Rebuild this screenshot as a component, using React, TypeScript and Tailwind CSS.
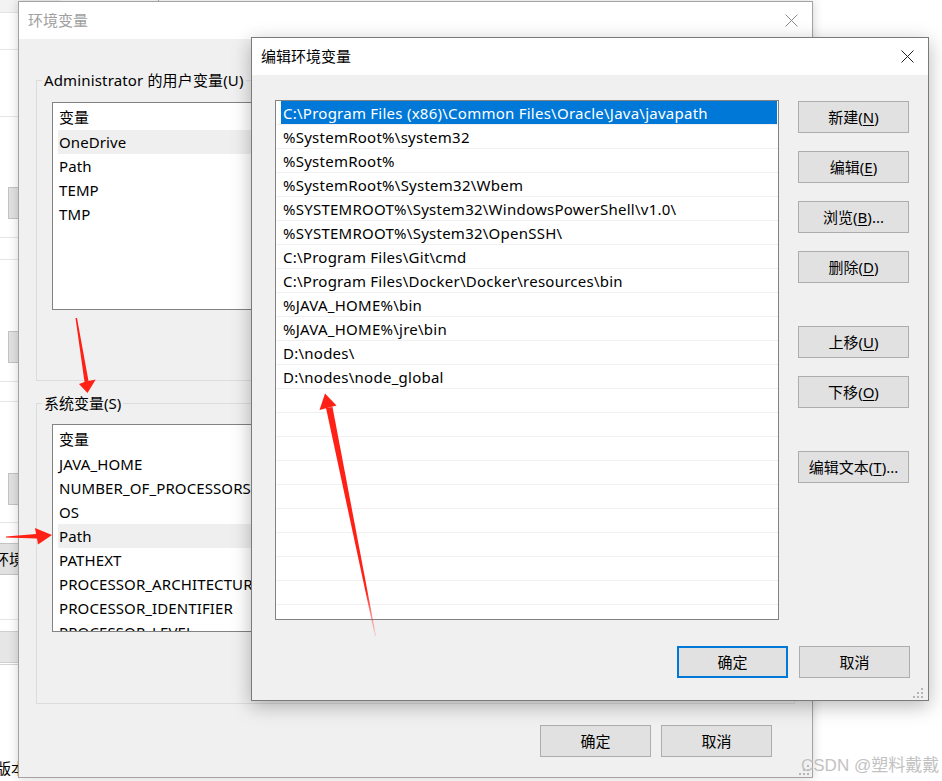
import React from "react";

const userVars = ["OneDrive", "Path", "TEMP", "TMP"];
const sysVars = [
  "JAVA_HOME",
  "NUMBER_OF_PROCESSORS",
  "OS",
  "Path",
  "PATHEXT",
  "PROCESSOR_ARCHITECTURE",
  "PROCESSOR_IDENTIFIER",
  "PROCESSOR_LEVEL",
];
const paths = [
  "C:\\Program Files (x86)\\Common Files\\Oracle\\Java\\javapath",
  "%SystemRoot%\\system32",
  "%SystemRoot%",
  "%SystemRoot%\\System32\\Wbem",
  "%SYSTEMROOT%\\System32\\WindowsPowerShell\\v1.0\\",
  "%SYSTEMROOT%\\System32\\OpenSSH\\",
  "C:\\Program Files\\Git\\cmd",
  "C:\\Program Files\\Docker\\Docker\\resources\\bin",
  "%JAVA_HOME%\\bin",
  "%JAVA_HOME%\\jre\\bin",
  "D:\\nodes\\",
  "D:\\nodes\\node_global",
];

function CloseX({ color }: { color: string }) {
  return (
    <svg width="13" height="13" viewBox="0 0 13 13">
      <path d="M0.5 0.5 L12.5 12.5 M12.5 0.5 L0.5 12.5" stroke={color} strokeWidth="1" />
    </svg>
  );
}

function Grip() {
  const dots = [
    [8, 0],
    [4, 4],
    [8, 4],
    [0, 8],
    [4, 8],
    [8, 8],
  ];
  return (
    <svg width="10" height="10" viewBox="0 0 10 10">
      {dots.map(([x, y]) => (
        <rect key={`${x}-${y}`} x={x} y={y} width="2" height="2" fill="#b5b5b5" />
      ))}
    </svg>
  );
}

function WinButton({
  label,
  acc,
  tail = "",
  primary = false,
}: {
  label: string;
  acc?: string;
  tail?: string;
  primary?: boolean;
}) {
  return (
    <div
      className={
        primary
          ? "w-[111px] h-[32px] bg-[#e1e1e1] border-2 border-[#0078d7] flex items-center justify-center text-[15px] text-black"
          : "w-[111px] h-[32px] bg-[#e1e1e1] border border-[#adadad] flex items-center justify-center text-[15px] text-black"
      }
    >
      <span>
        {label}
        {acc && (
          <>
            (<span className="underline underline-offset-2">{acc}</span>){tail}
          </>
        )}
      </span>
    </div>
  );
}

function BackWindow() {
  return (
    <div className="absolute left-0 top-0 w-[60px] h-[781px] bg-white flex flex-col text-[15px] text-black">
      <div className="h-[13px] shrink-0 bg-[#f3f3f3] border-b border-[#e3e3e3]" />
      <div className="h-[37px] shrink-0 border-b border-[#e6e6e6]" />
      <div className="h-[67px] shrink-0 border-b border-[#e6e6e6]" />
      <div className="h-[121px] shrink-0 border-b border-[#e6e6e6] pt-[70px] pl-[8px]">
        <div className="h-[32px] bg-[#e1e1e1] border border-[#c3c3c3]" />
      </div>
      <div className="h-[22px] shrink-0 border-b border-[#e6e6e6]" />
      <div className="h-[122px] shrink-0 border-b border-[#e6e6e6] pt-[71px] pl-[8px]">
        <div className="h-[32px] bg-[#e1e1e1] border border-[#c3c3c3]" />
      </div>
      <div className="h-[20px] shrink-0 border-b border-[#e6e6e6]" />
      <div className="h-[121px] shrink-0 border-b border-[#e6e6e6] pt-[71px] pl-[8px]">
        <div className="h-[32px] bg-[#e1e1e1] border border-[#c3c3c3]" />
      </div>
      <div className="h-[97px] shrink-0 border-b border-[#e6e6e6] pt-[20px]">
        <div className="h-[32px] bg-[#e1e1e1] border-y border-[#c3c3c3] flex items-center -ml-[6px] whitespace-nowrap">
          环境
        </div>
      </div>
      <div className="h-[45px] shrink-0 border-b border-[#d6d6d6] pt-[11px]">
        <div className="h-[32px] bg-[#e6e6e6] border-y border-[#cfcfcf]" />
      </div>
      <div className="flex-1 flex items-end pb-[2px] -ml-[4px] whitespace-nowrap">版本</div>
    </div>
  );
}

function VarList({
  items,
  selected,
}: {
  items: string[];
  selected: string;
}) {
  return (
    <div className="ml-[9px] w-[720px] h-[208px] bg-white border border-[#828282] overflow-hidden text-[15px] text-black tracking-[0.1px]">
      <div className="h-[27px] flex items-center pl-[6px] pt-[1px]">变量</div>
      {items.map((v) => (
        <div
          key={v}
          className={
            v === selected
              ? "h-[24px] ml-[5px] pl-[1px] pt-[1px] flex items-center bg-[#efefef]"
              : "h-[24px] ml-[5px] pl-[1px] pt-[1px] flex items-center"
          }
        >
          {v}
        </div>
      ))}
    </div>
  );
}

function EnvDialog() {
  return (
    <div className="absolute left-[18px] top-[1px] w-[795px] h-[777px] border border-[#a3a3a3] bg-[#f0f0f0] flex flex-col shadow-[0_0_10px_rgba(0,0,0,0.18)]">
      <div className="h-[37px] shrink-0 bg-white flex items-center justify-between pl-[9px] pr-[14px]">
        <span className="text-[15px] text-[#a0a0a0]">环境变量</span>
        <CloseX color="#8a8a8a" />
      </div>
      <div className="flex-1 flex flex-col pt-[31px] px-[17px]">
        <fieldset className="border border-[#dcdcdc] pl-[5px] pt-[12px] pb-[70px]">
          <legend className="px-[2px] h-[20px] leading-[20px] text-[15px] text-black tracking-[0.15px]">
            Administrator 的用户变量(U)
          </legend>
          <div className="ml-[1px]">
            <VarList items={userVars} selected="OneDrive" />
          </div>
        </fieldset>
        <fieldset className="mt-[12px] border border-[#dcdcdc] pl-[5px] pt-[11px] pb-[71px]">
          <legend className="px-[2px] h-[20px] leading-[20px] text-[15px] text-black">
            系统变量(S)
          </legend>
          <div className="ml-[1px]">
            <VarList items={sysVars} selected="Path" />
          </div>
        </fieldset>
        <div className="mt-[21px] flex justify-end gap-[10px] pr-[23px]">
          <WinButton label="确定" />
          <WinButton label="取消" />
        </div>
      </div>
      <div className="absolute right-[3px] bottom-[2px]">
        <Grip />
      </div>
    </div>
  );
}

function EditDialog() {
  const rows = Array.from({ length: 22 }, (_, i) => paths[i] ?? "");
  return (
    <div className="absolute left-[251px] top-[37px] w-[678px] h-[664px] border border-[#7a7a7a] bg-[#f0f0f0] flex flex-col shadow-[0_5px_18px_rgba(0,0,0,0.28)]">
      <div className="h-[37px] shrink-0 bg-white flex items-center justify-between pl-[9px] pr-[14px]">
        <span className="text-[15px] text-black">编辑环境变量</span>
        <CloseX color="#222" />
      </div>
      <div className="flex-1 flex flex-col pt-[25px] pl-[23px] pr-[18px]">
        <div className="flex gap-[19px]">
          <div className="w-[504px] h-[520px] bg-white border border-[#828282] overflow-hidden text-[15px] text-black tracking-[0.25px]">
            {rows.map((p, i) => (
              <div key={i} className="h-[24px] border-b border-[#f0f0f0] flex">
                <div
                  className={
                    i === 0
                      ? "flex-1 ml-[5px] mr-[1px] pl-[2px] pt-[2px] flex items-center bg-[#0078d7] text-white whitespace-nowrap"
                      : "flex-1 ml-[5px] mr-[1px] pl-[2px] pt-[2px] flex items-center whitespace-nowrap"
                  }
                >
                  {p}
                </div>
              </div>
            ))}
          </div>
          <div className="flex flex-col pt-[1px]">
            <div className="flex flex-col gap-[18px]">
              <WinButton label="新建" acc="N" />
              <WinButton label="编辑" acc="E" />
              <WinButton label="浏览" acc="B" tail="..." />
              <WinButton label="删除" acc="D" />
            </div>
            <div className="mt-[43px] flex flex-col gap-[18px]">
              <WinButton label="上移" acc="U" />
              <WinButton label="下移" acc="O" />
            </div>
            <div className="mt-[43px]">
              <WinButton label="编辑文本" acc="T" tail="..." />
            </div>
          </div>
        </div>
        <div className="mt-[26px] flex justify-end gap-[11px]">
          <WinButton label="确定" primary />
          <WinButton label="取消" />
        </div>
      </div>
      <div className="absolute right-[5px] bottom-[2px]">
        <Grip />
      </div>
    </div>
  );
}

function Arrows() {
  return (
    <svg className="absolute inset-0 pointer-events-none" width="942" height="781" viewBox="0 0 942 781">
      <defs>
        <linearGradient id="fade" gradientUnits="userSpaceOnUse" x1="329" y1="408" x2="376" y2="636">
          <stop offset="0" stopColor="#ff2016" stopOpacity="1" />
          <stop offset="0.8" stopColor="#ff2016" stopOpacity="1" />
          <stop offset="1" stopColor="#ff2016" stopOpacity="0.15" />
        </linearGradient>
      </defs>
      <polygon
        points="75.5,318 77,318 88.5,381 95.7,379.5 87.5,393 79,384 84.5,382"
        fill="#ff2016"
      />
      <polygon
        points="6,537.6 6,536.6 36,534 35,528 52,535 38,544.5 37,538.6"
        fill="#ff2016"
      />
      <polygon points="326,408 332.5,407 376,636 375,636" fill="url(#fade)" />
      <polygon points="319.5,410 325,393.5 336.5,405.5" fill="#ff2016" />
    </svg>
  );
}

export default function App() {
  return (
    <div className="relative w-[942px] h-[781px] bg-white overflow-hidden font-['Noto_Sans','Noto_Sans_CJK_SC',sans-serif]">
      <BackWindow />
      <div className="absolute left-[158px] top-0 w-px h-[2px] bg-[#b0b0b0]" />
      <EnvDialog />
      <EditDialog />
      <Arrows />
      <div className="absolute left-[801px] top-[754px] whitespace-nowrap text-[17px] leading-[24px] text-[#b4b4b4] opacity-80 [text-shadow:0_0_2px_#fff] font-['Liberation_Sans','Noto_Sans_CJK_SC',sans-serif]">
        CSDN @塑料戴戴
      </div>
    </div>
  );
}
